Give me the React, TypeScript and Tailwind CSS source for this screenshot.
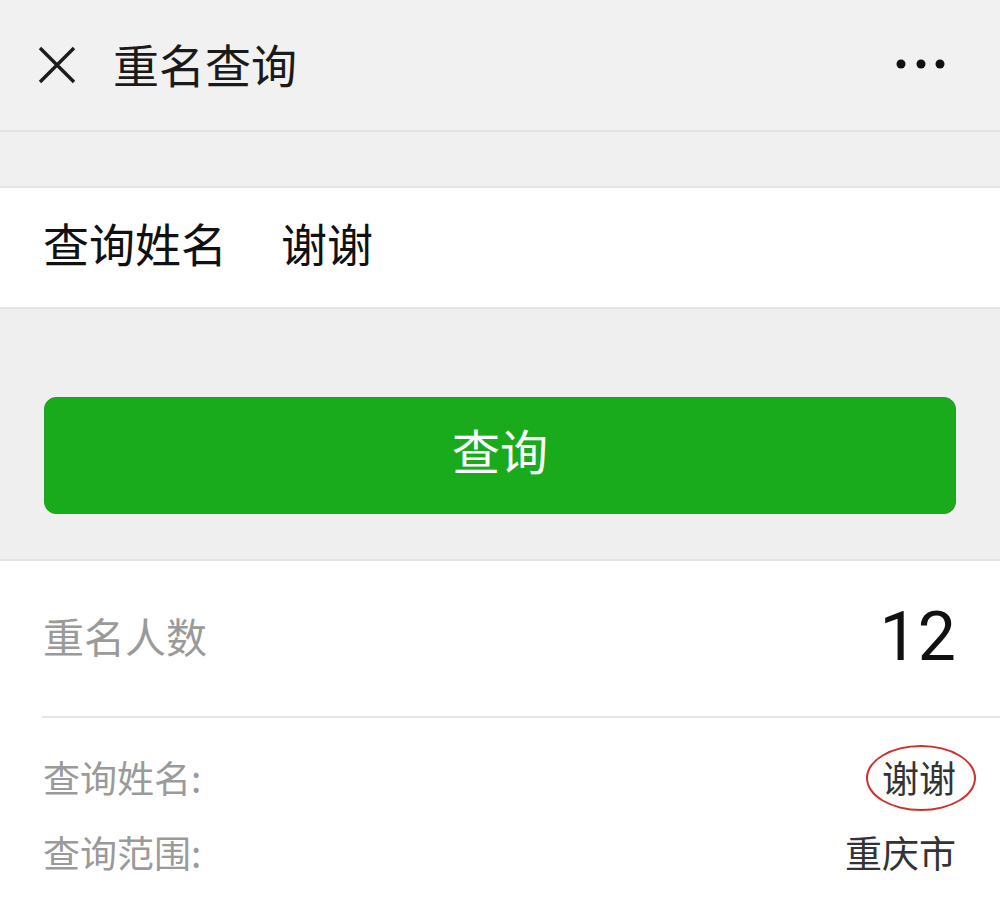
import React from "react"

const font = { fontFamily: '"Noto Sans CJK SC", "Noto Sans", sans-serif' }

function CloseIcon() {
  return (
    <svg width="40" height="40" viewBox="0 0 40 40" className="shrink-0">
      <path d="M3 3 L37 37 M37 3 L3 37" stroke="#1c1c1c" strokeWidth="3.4" strokeLinecap="butt" />
    </svg>
  )
}

function MoreIcon() {
  return (
    <svg width="50" height="12" viewBox="0 0 50 12">
      <circle cx="5" cy="6" r="4.5" fill="#111" />
      <circle cx="25" cy="6" r="4.5" fill="#111" />
      <circle cx="44" cy="6" r="4.5" fill="#111" />
    </svg>
  )
}

export default function App() {
  return (
    <div className="w-[1000px] h-[915px] bg-white overflow-hidden" style={font}>
      {/* Top bar */}
      <div className="h-[132px] bg-[#f1f1f1] border-b-2 border-[#e2e2e2] flex items-center pl-[37px] pr-[54px]">
        <CloseIcon />
        <div className="ml-[36px] text-[46px] leading-none text-[#1a1a1a] -mt-[4px]">重名查询</div>
        <div className="ml-auto -mt-[2px]">
          <MoreIcon />
        </div>
      </div>

      <div className="h-[56px] bg-[#f0f0f0] border-b-2 border-[#e3e3e3]" />

      {/* Name row */}
      <div className="h-[121px] bg-white border-b-2 border-[#e3e3e3] flex items-center pl-[43px]">
        <span className="text-[46px] leading-none text-[#111] -mt-[12px]">查询姓名</span>
        <span className="ml-[54px] text-[46px] leading-none text-[#111] -mt-[12px]">谢谢</span>
      </div>

      {/* Button area */}
      <div className="h-[252px] bg-[#efefef] border-b-2 border-[#e3e3e3] pt-[88px] px-[44px]">
        <button className="w-full h-[117px] rounded-[12px] bg-[#1aab1c] border border-[#2a9a2a] text-white text-[48px] leading-none flex items-center justify-center">
          <span className="-mt-[14px]">查询</span>
        </button>
      </div>

      {/* Result */}
      <div className="bg-white">
        <div className="h-[155px] flex items-center justify-between pl-[43px] pr-[44px]">
          <span className="text-[41px] leading-none text-[#9a9a9a] -mt-[6px]">重名人数</span>
          <span className="text-[68px] leading-none text-[#111] -mt-[4px]" style={{ fontFamily: 'Roboto, "Noto Sans", sans-serif' }}>
            12
          </span>
        </div>
        <div className="ml-[42px] border-t-2 border-[#e5e5e5]" />
        <div className="pl-[43px] pr-[44px] pt-[39px] flex flex-col gap-[35px]">
          <div className="flex items-center justify-between h-[40px]">
            <span className="text-[37px] leading-none text-[#9a9a9a]">查询姓名:</span>
            <span className="relative text-[37px] leading-none text-[#333]">
              谢谢
              <span className="absolute -left-[16px] -right-[20px] -top-[14px] -bottom-[15px] rounded-[50%] border-2 border-[#d0302b]" />
            </span>
          </div>
          <div className="flex items-center justify-between h-[40px]">
            <span className="text-[37px] leading-none text-[#9a9a9a]">查询范围:</span>
            <span className="text-[37px] leading-none text-[#333]">重庆市</span>
          </div>
        </div>
      </div>
    </div>
  )
}
